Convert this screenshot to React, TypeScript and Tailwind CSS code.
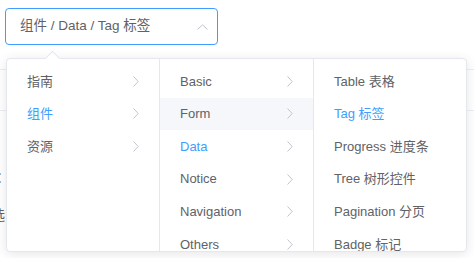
import React from "react";

type Item = { label: string; active?: boolean; hover?: boolean; leaf?: boolean };

const COLUMNS: Item[][] = [
  [{ label: "指南" }, { label: "组件", active: true }, { label: "资源" }],
  [
    { label: "Basic" },
    { label: "Form", hover: true },
    { label: "Data", active: true },
    { label: "Notice" },
    { label: "Navigation" },
    { label: "Others" },
  ],
  [
    { label: "Table 表格", leaf: true },
    { label: "Tag 标签", active: true, leaf: true },
    { label: "Progress 进度条", leaf: true },
    { label: "Tree 树形控件", leaf: true },
    { label: "Pagination 分页", leaf: true },
    { label: "Badge 标记", leaf: true },
  ],
];

function ChevronRight() {
  return (
    <svg width="6" height="11" viewBox="0 0 6 11" fill="none" className="shrink-0">
      <path d="M0.8 0.8 L5.2 5.5 L0.8 10.2" stroke="#c0c4cc" strokeWidth="1" strokeLinecap="round" strokeLinejoin="round" />
    </svg>
  );
}

function ChevronUp() {
  return (
    <svg width="11" height="6" viewBox="0 0 11 6" fill="none">
      <path d="M0.8 5.2 L5.5 0.8 L10.2 5.2" stroke="#c0c4cc" strokeWidth="1" strokeLinecap="round" strokeLinejoin="round" />
    </svg>
  );
}

function Column({ items, width, last }: { items: Item[]; width: string; last?: boolean }) {
  return (
    <div className={`${width} h-full overflow-hidden py-[6px] ${last ? "" : "border-r border-[#e4e7ed]"}`}>
      {items.map((it) => (
        <div
          key={it.label}
          className={`flex h-[32.6px] items-center justify-between pl-[20px] pr-[20px] text-[13px] ${
            it.active ? "text-[#409eff]" : "text-[#606266]"
          } ${it.hover ? "bg-[#f5f7fa]" : ""}`}
        >
          <span className="whitespace-nowrap">{it.label}</span>
          {!it.leaf && <ChevronRight />}
        </div>
      ))}
    </div>
  );
}

export default function App() {
  return (
    <div
      className="relative h-[258px] w-[474px] overflow-hidden bg-white"
      style={{ fontFamily: '"Liberation Sans", "Noto Sans CJK SC", sans-serif' }}
    >
      {/* page behind the dropdown */}
      <div className="pl-[5px] pt-[8px]">
        <div className="flex h-[37px] w-[213px] items-center justify-between rounded-[4px] border border-[#409eff] pl-[14px] pr-[9px] text-[13.5px] text-[#606266]">
          <span>组件 / Data / Tag 标签</span>
          <ChevronUp />
        </div>
      </div>
      <div className="mt-[24px] border-b border-[#ebeef5]" />
      <div className="mt-[40px] border-b border-[#ebeef5]" />
      <div className="-ml-[4px] mt-[56px] text-[14px] leading-[20px] text-[#606266]">：</div>
      <div className="-ml-[9px] mt-[18px] text-[14px] leading-[20px] text-[#606266]">选</div>

      {/* cascader popup */}
      <div className="absolute left-[6px] top-[58px] h-[194px] w-[461px] rounded-[4px] border border-[#e4e7ed] bg-white shadow-[0_2px_12px_0_rgba(0,0,0,0.1)]">
        <div className="absolute -top-[6px] left-[40px] h-[11px] w-[11px] rotate-45 border-l border-t border-[#e4e7ed] bg-white" />
        <div className="relative flex h-full">
          <Column items={COLUMNS[0]} width="w-[153px]" />
          <Column items={COLUMNS[1]} width="w-[154px]" />
          <Column items={COLUMNS[2]} width="w-[152px]" last />
        </div>
      </div>
    </div>
  );
}
